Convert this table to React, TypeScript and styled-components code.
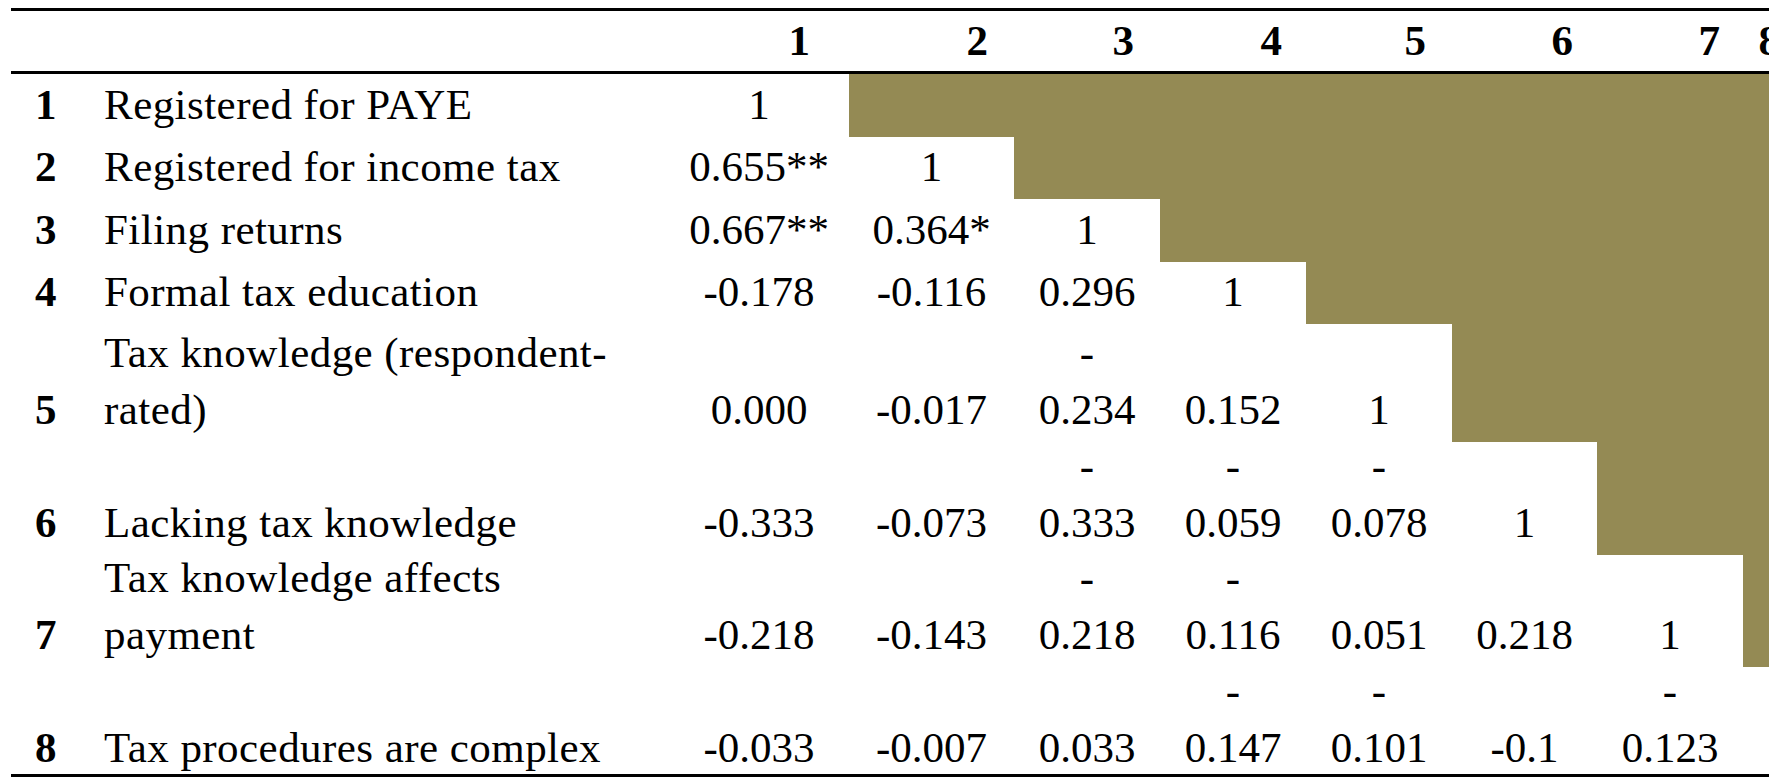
import styled, { createGlobalStyle, css } from "styled-components";

const GlobalStyle = createGlobalStyle`
  html, body {
    margin: 0;
    padding: 0;
    background: #ffffff;
    overflow: hidden;
  }
  body {
    font-family: "Liberation Serif", "Times New Roman", serif;
    color: #000000;
  }
`;

// num | label | 8 value columns
const columns = "93px 565px 180px 165px 146px 146px 146px 145px 146px 146px";
const olive = "#948a54";

const Page = styled.main`
  padding: 8px 0 0 11px;
  width: max-content;
`;

const Table = styled.section`
  border-top: 3px solid #000;
  border-bottom: 3px solid #000;
  font-size: 43px;
  line-height: 57px;
`;

const HeaderRow = styled.div`
  display: grid;
  grid-template-columns: ${columns};
  height: 60px;
  border-bottom: 3px solid #000;
`;

const HeaderCell = styled.div<{ $pad: number }>`
  display: flex;
  align-items: flex-end;
  justify-content: flex-end;
  padding: 0 ${(p) => p.$pad}px 2px 0;
  font-weight: 700;
`;

const Row = styled.div<{ $tall: boolean }>`
  display: grid;
  grid-template-columns: ${columns};
  height: ${(p) => (p.$tall ? 112.5 : 62.5)}px;
`;

const cellBase = css`
  display: flex;
  flex-direction: column;
  justify-content: flex-end;
  padding-bottom: 4px;
  white-space: pre;
`;

const NumCell = styled.div`
  ${cellBase};
  padding-left: 24px;
  font-weight: 700;
`;

const LabelCell = styled.div`
  ${cellBase};
  text-align: left;
  letter-spacing: 0.45px;
`;

const ValueCell = styled.div<{ $shade: boolean }>`
  ${cellBase};
  text-align: center;
  background: ${(p) => (p.$shade ? olive : "transparent")};
`;

type Item = { n: number; label: string; values: string[] };

const rows: Item[] = [
  { n: 1, label: "Registered for PAYE", values: ["1"] },
  { n: 2, label: "Registered for income tax", values: ["0.655**", "1"] },
  { n: 3, label: "Filing returns", values: ["0.667**", "0.364*", "1"] },
  { n: 4, label: "Formal tax education", values: ["-0.178", "-0.116", "0.296", "1"] },
  {
    n: 5,
    label: "Tax knowledge (respondent-\nrated)",
    values: ["0.000", "-0.017", "-\n0.234", "0.152", "1"],
  },
  {
    n: 6,
    label: "Lacking tax knowledge",
    values: ["-0.333", "-0.073", "-\n0.333", "-\n0.059", "-\n0.078", "1"],
  },
  {
    n: 7,
    label: "Tax knowledge affects\npayment",
    values: ["-0.218", "-0.143", "-\n0.218", "-\n0.116", "0.051", "0.218", "1"],
  },
  {
    n: 8,
    label: "Tax procedures are complex",
    values: ["-0.033", "-0.007", "0.033", "-\n0.147", "-\n0.101", "-0.1", "-\n0.123"],
  },
];

// right padding of each header number (the last one sits further left)
const headerPads = [39, 26, 26, 24, 26, 24, 23, 109];

function App() {
  return (
    <Page>
      <GlobalStyle />
      <Table>
        <HeaderRow>
          <div />
          <div />
          {headerPads.map((pad, i) => (
            <HeaderCell key={i} $pad={pad}>
              {i + 1}
            </HeaderCell>
          ))}
        </HeaderRow>
        {rows.map((row) => {
          const tall = [row.label, ...row.values].some((s) => s.includes("\n"));
          return (
            <Row key={row.n} $tall={tall}>
              <NumCell>{row.n}</NumCell>
              <LabelCell>{row.label}</LabelCell>
              {headerPads.map((_, j) => (
                <ValueCell key={j} $shade={j >= row.n}>
                  {row.values[j] ?? ""}
                </ValueCell>
              ))}
            </Row>
          );
        })}
      </Table>
    </Page>
  );
}

export default App;
